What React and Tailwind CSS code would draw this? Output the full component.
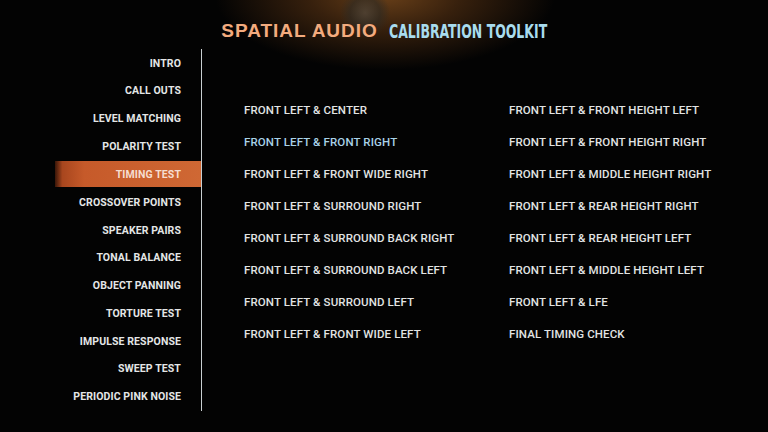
import { useState } from "react";

const sections = [
  "INTRO",
  "CALL OUTS",
  "LEVEL MATCHING",
  "POLARITY TEST",
  "TIMING TEST",
  "CROSSOVER POINTS",
  "SPEAKER PAIRS",
  "TONAL BALANCE",
  "OBJECT PANNING",
  "TORTURE TEST",
  "IMPULSE RESPONSE",
  "SWEEP TEST",
  "PERIODIC PINK NOISE",
];

const leftTracks = [
  "FRONT LEFT & CENTER",
  "FRONT LEFT & FRONT RIGHT",
  "FRONT LEFT & FRONT WIDE RIGHT",
  "FRONT LEFT & SURROUND RIGHT",
  "FRONT LEFT & SURROUND BACK RIGHT",
  "FRONT LEFT & SURROUND BACK LEFT",
  "FRONT LEFT & SURROUND LEFT",
  "FRONT LEFT & FRONT WIDE LEFT",
];

const rightTracks = [
  "FRONT LEFT & FRONT HEIGHT LEFT",
  "FRONT LEFT & FRONT HEIGHT RIGHT",
  "FRONT LEFT & MIDDLE HEIGHT RIGHT",
  "FRONT LEFT & REAR HEIGHT RIGHT",
  "FRONT LEFT & REAR HEIGHT LEFT",
  "FRONT LEFT & MIDDLE HEIGHT LEFT",
  "FRONT LEFT & LFE",
  "FINAL TIMING CHECK",
];

function Track({ label, focused }) {
  return (
    <div
      className={
        "h-8 flex items-center text-[11.5px] font-medium tracking-[0.01em] whitespace-nowrap " +
        (focused ? "text-[#a9d2e8]" : "text-[#e2e4e4]")
      }
    >
      {label}
    </div>
  );
}

export default function App() {
  const [active] = useState("TIMING TEST");
  const focused = "FRONT LEFT & FRONT RIGHT";

  return (
    <div className="relative w-[768px] h-[432px] overflow-hidden bg-[#030303] font-['Roboto',sans-serif]">
      {/* glow behind the title */}
      <div className="absolute left-[215px] top-[-80px] w-[340px] h-[150px] rounded-full bg-[radial-gradient(closest-side,#74461b,#3c230e_45%,transparent)] opacity-90" />
      <div className="absolute left-[340px] top-[-12px] w-[50px] h-[50px] rounded-full bg-[radial-gradient(closest-side,#504c44,#2c2a24_60%,transparent)] opacity-60" />

      <div className="relative flex flex-col h-full">
        <header className="h-[49px] flex items-center justify-center gap-[11px] pt-[14px]">
          <span className="font-['Liberation_Sans',sans-serif] font-bold text-[19px] tracking-[0.05em] text-[#f3ab7e]">
            SPATIAL AUDIO
          </span>
          <span className="w-[158px] whitespace-nowrap">
            <span className="inline-block origin-left scale-x-[0.73] font-['DejaVu_Sans_Condensed','DejaVu_Sans',sans-serif] font-bold text-[19px] text-[#a8dcee]">
              CALIBRATION TOOLKIT
            </span>
          </span>
        </header>

        <div className="flex">
          <nav className="ml-[55px] w-[147px] border-r-[1.5px] border-[#c9cfd1] flex flex-col">
            {sections.map((s) => (
              <div
                key={s}
                className={
                  "flex items-center justify-end pr-5 pt-px text-[10.5px] font-bold tracking-[0.01em] whitespace-nowrap " +
                  (s === active
                    ? "my-px h-[26px] text-[#f6ddd0] bg-[linear-gradient(90deg,#3a1608_0%,#a8461e_5%,#c65a2a_20%,#cf6834_100%)]"
                    : "h-[27.8px] text-[#e4e6e6]")
                }
              >
                {s}
              </div>
            ))}
          </nav>

          <main className="flex-1 pl-[42px] pt-[46px] grid grid-cols-[265px_1fr] content-start">
            <div className="flex flex-col">
              {leftTracks.map((t) => (
                <Track key={t} label={t} focused={t === focused} />
              ))}
            </div>
            <div className="flex flex-col">
              {rightTracks.map((t) => (
                <Track key={t} label={t} focused={false} />
              ))}
            </div>
          </main>
        </div>
      </div>
    </div>
  );
}
